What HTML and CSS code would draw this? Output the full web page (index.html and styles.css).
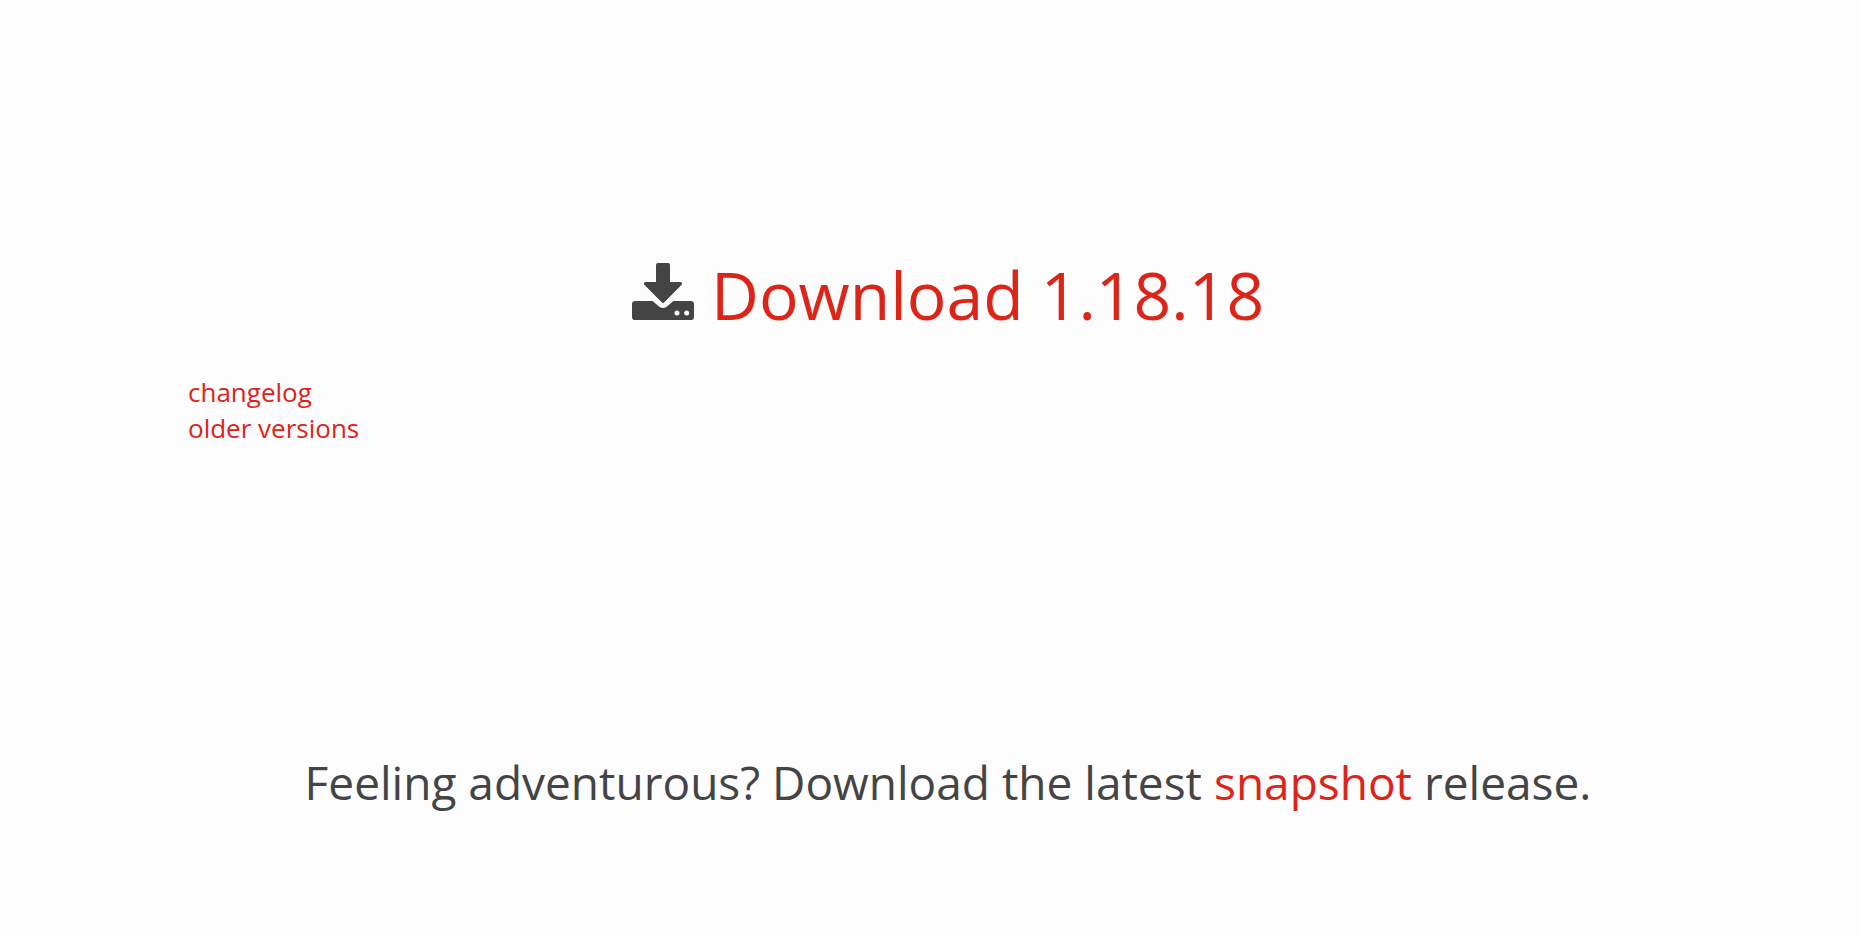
FILE: index.html
```html
<!DOCTYPE html>
<html lang="en">
<head>
<meta charset="utf-8">
<title>Download</title>
<link rel="stylesheet" href="styles.css">
</head>
<body>
<main class="page">
<section class="release">
<h1 class="title"><svg class="icon" viewBox="0 0 186 171" aria-hidden="true"><path d="M78 0h30q6 0 6 6v51h30q9 1 5 8L97 118q-4 4-8 0L37 65q-4-7 5-8h30V6q0-6 6-6z"/><path fill-rule="evenodd" d="M10 114h52l17 15q14 12 28 0l17-15h52q10 0 10 10v37q0 10-10 10H10q-10 0-10-10v-37q0-10 10-10zm125 28.500a7.500 7.500 0 1 0 0 15a7.500 7.500 0 1 0 0-15zm29 0a7.500 7.500 0 1 0 0 15a7.500 7.500 0 1 0 0-15z"/></svg> <a href="#download">Download 1.18.18</a></h1>
<nav class="links"><a href="#changelog">changelog</a><a href="#older">older versions</a></nav>
</section>
<p class="snapshot">Feeling adventurous? Download the latest <a href="#snapshot">snapshot</a> release.</p>
</main>
</body>
</html>
```
FILE: styles.css
```css
body {
  margin: 0;
  background: #fcfcfc;
  color: #444;
  font-family: "Open Sans", sans-serif;
}
a {
  color: #dc2418;
  text-decoration: none;
}
.page {
  padding: 246px 152px 0 188px;
}
.title {
  margin: 0;
  text-align: center;
  font-size: 66px;
  font-weight: 400;
  line-height: 96px;
}
.icon {
  width: 62px;
  height: 57px;
  fill: currentColor;
}
.links {
  display: flex;
  flex-direction: column;
  align-items: flex-start;
  margin-top: 32px;
  font-size: 26px;
  line-height: 36px;
}
.snapshot {
  margin: 302px 0 0;
  text-align: center;
  font-size: 46px;
  line-height: 68px;
}
```
